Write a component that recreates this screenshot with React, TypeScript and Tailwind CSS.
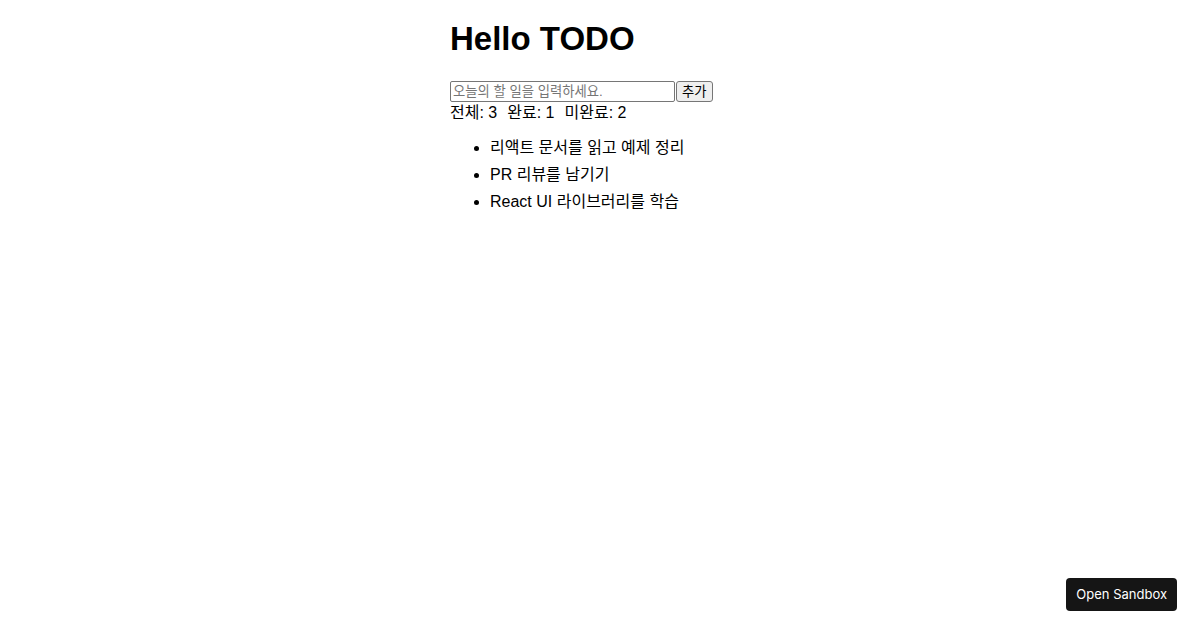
import { useState } from "react";

interface Todo { id: number; text: string; done: boolean; }

const initial: Todo[] = [
  { id: 1, text: "리액트 문서를 읽고 예제 정리", done: true },
  { id: 2, text: "PR 리뷰를 남기기", done: false },
  { id: 3, text: "React UI 라이브러리를 학습", done: false },
];

export default function App() {
  const [todos, setTodos] = useState<Todo[]>(initial);
  const [input, setInput] = useState("");

  const done = todos.filter((t) => t.done).length;

  function add(e?: React.FormEvent) {
    e?.preventDefault();
    const text = input.trim();
    if (!text) return;
    setTodos((list) => [...list, { id: Date.now(), text, done: false }]);
    setInput("");
  }

  return (
    <div
      className="min-h-screen bg-white text-black"
      style={{ fontFamily: '"Liberation Sans", Arial, "Noto Sans CJK KR", sans-serif' }}
    >
      <div className="mx-auto w-[300px]">
        <h1 className="mt-[20px] mb-[24px] text-[33px] font-bold leading-[37px]">Hello TODO</h1>

        <form onSubmit={add} className="flex items-center gap-px">
          <input
            value={input}
            onChange={(e) => setInput(e.target.value)}
            placeholder="오늘의 할 일을 입력하세요."
            className="h-[21px] w-[225px] rounded-[2px] border border-[#767676] px-[2px] text-[13.33px] leading-[15px] outline-none placeholder:text-[#757575]"
          />
          <button
            type="submit"
            className="h-[21px] rounded-[3px] border border-[#767676] bg-[#efefef] px-[5px] text-[13.33px] leading-[15px]"
          >
            추가
          </button>
        </form>

        <div className="mt-px flex gap-[10px] text-[16px] leading-[19px]">
          <span>전체: {todos.length}</span>
          <span>완료: {done}</span>
          <span>미완료: {todos.length - done}</span>
        </div>

        <ul className="mt-4 list-disc pl-[40px] text-[16px] leading-[19px]">
          {todos.map((t) => (
            <li key={t.id} className="mb-2">
              {t.text}
            </li>
          ))}
        </ul>
      </div>

      <button
        className="fixed right-[23px] bottom-[19px] h-[33px] rounded-[4px] bg-[#151515] px-[10px] text-[13px] text-white"
        style={{ fontFamily: "Inter, sans-serif" }}
      >
        Open Sandbox
      </button>
    </div>
  );
}
